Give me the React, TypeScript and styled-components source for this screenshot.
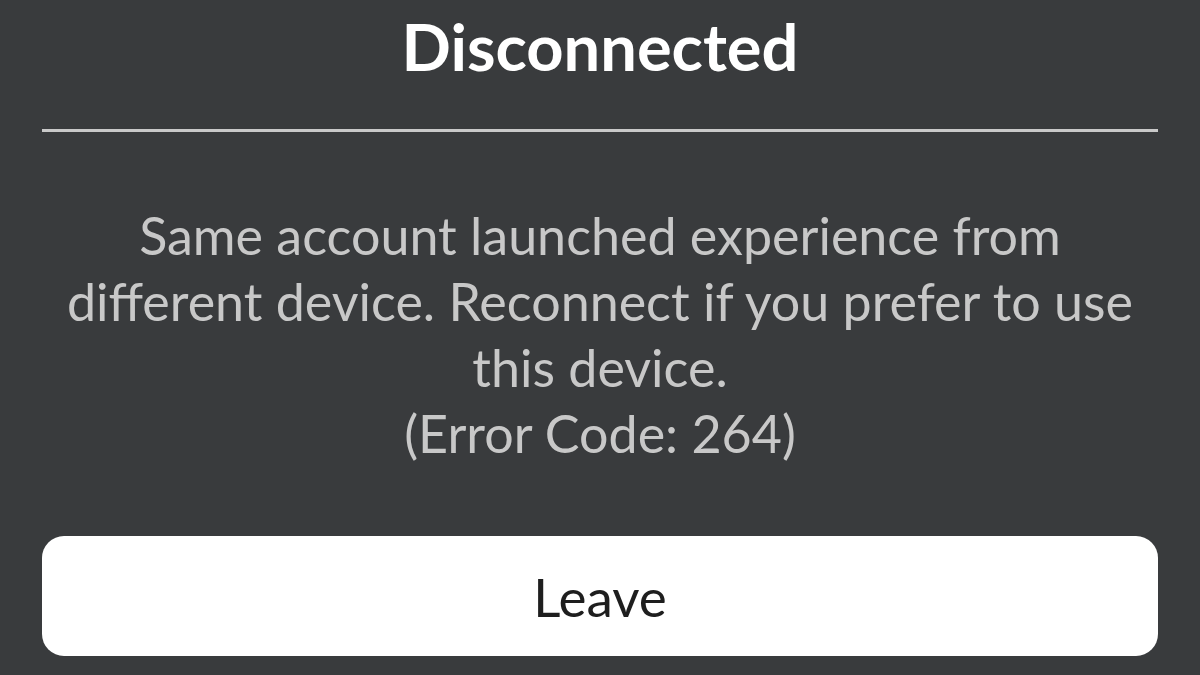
import React from "react"
import styled, {createGlobalStyle} from "styled-components";

const GlobalStyle = createGlobalStyle`
  html, body {
    margin: 0;
    padding: 0;
    background-color: #393b3d;
  }
`

const StyledScreen = styled.div`
  width: 1200px;
  height: 675px;
  overflow: hidden;
  background-color: #393b3d;
  font-family: Lato, "Source Sans Pro", "Open Sans", sans-serif;
  display: flex;
  flex-direction: column;
  align-items: stretch;
  padding: 0 42px 0 42px;
  box-sizing: border-box;
`

const StyledTitle = styled.h1`
  margin: 0;
  height: 92px;
  display: flex;
  align-items: center;
  justify-content: center;
  font-size: 65px;
  font-weight: 700;
  color: #ffffff;
`

const StyledDivider = styled.div`
  height: 3px;
  background-color: #c9c9c9;
  margin-top: 37px;
`

const StyledMessage = styled.p`
  margin: 70px 0 0 0;
  text-align: center;
  font-size: 52px;
  line-height: 66px;
  color: #c8c8c8;
`

const StyledButton = styled.button`
  margin-top: auto;
  margin-bottom: 19px;
  height: 120px;
  border: none;
  border-radius: 22px;
  background-color: #ffffff;
  color: #1e1e1e;
  font-family: inherit;
  font-size: 53px;
  cursor: pointer;
`

export default function App() {
    return (
        <>
            <GlobalStyle/>
            <StyledScreen>
                <StyledTitle>Disconnected</StyledTitle>
                <StyledDivider/>
                <StyledMessage>
                    Same account launched experience from<br/>
                    different device. Reconnect if you prefer to use<br/>
                    this device.<br/>
                    (Error Code: 264)
                </StyledMessage>
                <StyledButton>Leave</StyledButton>
            </StyledScreen>
        </>
    )
}
